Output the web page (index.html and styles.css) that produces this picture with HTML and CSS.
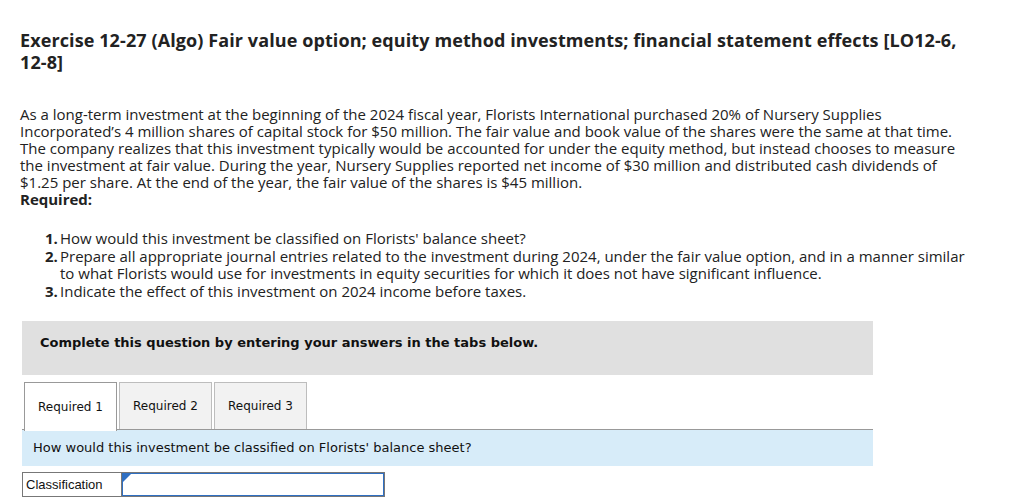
FILE: index.html
```html
<!DOCTYPE html>
<html>
<head>
<meta charset="utf-8">
<link rel="stylesheet" href="styles.css">
</head>
<body>
<div class="page">
  <h1 class="title">Exercise 12-27 (Algo) Fair value option; equity method investments; financial statement effects [LO12-6, 12-8]</h1>
  <p class="intro">As a long-term investment at the beginning of the 2024 fiscal year, Florists International purchased 20% of Nursery Supplies Incorporated’s 4 million shares of capital stock for $50 million. The fair value and book value of the shares were the same at that time. The company realizes that this investment typically would be accounted for under the equity method, but instead chooses to measure the investment at fair value. During the year, Nursery Supplies reported net income of $30 million and distributed cash dividends of $1.25 per share. At the end of the year, the fair value of the shares is $45 million.<br><b>Required:</b></p>
  <ol class="reqs">
    <li><span class="num">1.</span><span>How would this investment be classified on Florists' balance sheet?</span></li>
    <li><span class="num">2.</span><span>Prepare all appropriate journal entries related to the investment during 2024, under the fair value option, and in a manner similar to what Florists would use for investments in equity securities for which it does not have significant influence.</span></li>
    <li><span class="num">3.</span><span>Indicate the effect of this investment on 2024 income before taxes.</span></li>
  </ol>
  <div class="panel">
    <div class="instr">Complete this question by entering your answers in the tabs below.</div>
    <div class="tabs">
      <div class="tab active">Required 1</div>
      <div class="tab">Required 2</div>
      <div class="tab">Required 3</div>
    </div>
    <div class="prompt">How would this investment be classified on Florists' balance sheet?</div>
    <div class="answer">
      <div class="label">Classification</div>
      <div class="input"><span class="flag"></span></div>
    </div>
  </div>
</div>
</body>
</html>
```
FILE: styles.css
```css
html, body { margin: 0; padding: 0; background: #fff; }
.page { padding: 29px 20px 0 20px; color: #222; font-family: "Open Sans", "Liberation Sans", sans-serif; }
.title { margin: 0; font-size: 18px; line-height: 22px; font-weight: 700; width: 945px; letter-spacing: 0.1px; }
.intro { margin: 33px 0 0 0; font-size: 15px; line-height: 17px; width: 945px; }
.reqs { list-style: none; margin: 22px 0 0 0; padding: 0 0 0 25px; font-size: 15px; line-height: 17.7px; width: 920px; }
.reqs li { display: flex; }
.reqs .num { font-weight: 700; width: 15px; flex: none; }
.panel { margin-top: 20px; width: 851px; margin-left: 2px; font-family: "DejaVu Sans", Verdana, sans-serif; }
.instr { background: #e0e0e0; height: 54px; box-sizing: border-box; padding: 14px 0 0 18px; font-weight: 700; font-size: 13px; line-height: 16px; color: #111; }
.tabs { display: flex; gap: 2px; margin-top: 7px; padding-left: 2px; position: relative; z-index: 1; }
.tab { width: 91px; height: 46px; border: 1px solid #bdbdbd; border-bottom: none; background: #f2f2f2; display: flex; align-items: center; justify-content: center; font-size: 12px; color: #111; }
.tab.active { background: #fff; border-color: #999; height: 48px; margin-bottom: -2px; }
.prompt { background: #d7ecf9; border-top: 1px solid #999; height: 36px; display: flex; align-items: center; padding-left: 11px; font-size: 13px; color: #111; }
.answer { display: flex; margin-top: 6px; font-family: "Liberation Sans", Arial, sans-serif; }
.label { border: 1px solid #777; display: flex; align-items: center; padding-left: 3px; font-size: 13px; color: #111; box-sizing: border-box; width: 100px; height: 25px; }
.input { position: relative; width: 264px; height: 25px; box-sizing: border-box; border: 1px solid #777; box-shadow: inset 0 0 0 1px #2f6fc2; margin-left: -1px; background: #fff; }
.flag { position: absolute; left: 1px; top: 1px; width: 0; height: 0; border-top: 4px solid #2f6fc2; border-right: 4px solid transparent; border-bottom: 4px solid transparent; border-left: 4px solid #2f6fc2; }
```
